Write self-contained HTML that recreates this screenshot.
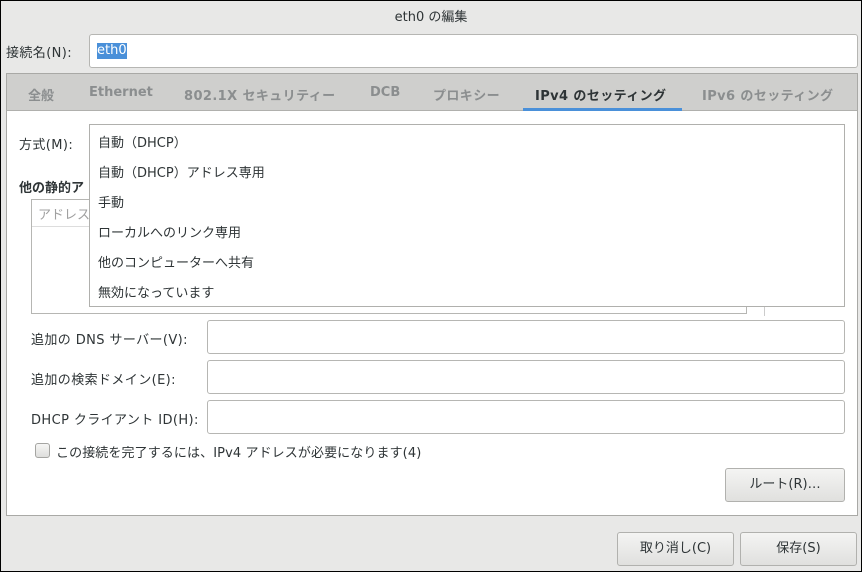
<!DOCTYPE html>
<html><head><meta charset="utf-8"><style>
*{box-sizing:border-box;margin:0;padding:0}
body{width:862px;height:572px;overflow:hidden;background:#e8e8e7;font-family:"DejaVu Sans","Noto Sans CJK JP",sans-serif;font-size:13px;color:#2e3436;position:relative}
.frame{position:absolute;left:0;top:0;width:862px;height:572px;border:1px solid #000}
.abs{position:absolute}
.inp{position:absolute;background:#fff;border:1px solid #b6b6b3;border-radius:3px}
.btn{position:absolute;border:1px solid #b1b1ae;border-radius:3px;background:linear-gradient(#f4f4f3,#e0e0de);text-align:center;line-height:31px;color:#2e3436}
.tab{position:absolute;top:85px;font-weight:bold;color:#8b8e8f}
.item{position:absolute;left:8px}
</style></head><body>
<div class="frame"></div>
<div class="abs" style="left:0;top:6px;width:862px;text-align:center;color:#2e3436">eth0 の編集</div>
<div class="abs" style="left:6px;top:42px;letter-spacing:0.4px">接続名(N):</div>
<div class="inp" style="left:89px;top:34px;width:769px;height:34px"><span class="abs" style="left:7px;top:8px;background:#4a90d9;color:#fff;line-height:16px">eth0</span></div>
<div class="abs" style="left:6px;top:73px;width:852px;height:443px;border:1px solid #a9a9a6;background:#fff"></div>
<div class="abs" style="left:7px;top:74px;width:850px;height:37px;background:#cfcfcd;border-bottom:1px solid #b0b0ad"></div>
<div class="tab" style="left:28px">全般</div>
<div class="tab" style="left:89px">Ethernet</div>
<div class="tab" style="left:184px;letter-spacing:0.4px">802.1X セキュリティー</div>
<div class="tab" style="left:370px">DCB</div>
<div class="tab" style="left:433px;letter-spacing:0.4px">プロキシー</div>
<div class="tab" style="left:535px;color:#2e3436;letter-spacing:0.4px">IPv4 のセッティング</div>
<div class="abs" style="left:523px;top:108px;width:159px;height:3px;background:#4a90d9"></div>
<div class="tab" style="left:702px;letter-spacing:0.4px">IPv6 のセッティング</div>
<div class="abs" style="left:19px;top:134px;letter-spacing:0.4px">方式(M):</div>
<div class="abs" style="left:19px;top:177px;font-weight:bold">他の静的ア</div>
<div class="abs" style="left:31px;top:199px;width:716px;height:115px;border:1px solid #b6b6b3;background:#fff"><div style="height:27px;border-bottom:1px solid #ddd;color:#a0a0a0;padding:4px 6px">アドレス</div></div>
<div class="abs" style="left:764px;top:298px;width:1px;height:18px;background:#ccc"></div>
<div class="abs" style="left:89px;top:124px;width:756px;height:183px;border:1px solid #b0b0ad;background:#fff">
<div class="item" style="top:7px">自動（DHCP）</div>
<div class="item" style="top:37px">自動（DHCP）アドレス専用</div>
<div class="item" style="top:67px">手動</div>
<div class="item" style="top:97px">ローカルへのリンク専用</div>
<div class="item" style="top:127px">他のコンピューターへ共有</div>
<div class="item" style="top:157px">無効になっています</div>
</div>
<div class="abs" style="left:31px;top:329px;letter-spacing:0.4px">追加の DNS サーバー(V):</div>
<div class="inp" style="left:207px;top:320px;width:638px;height:34px"></div>
<div class="abs" style="left:31px;top:369px;letter-spacing:0.4px">追加の検索ドメイン(E):</div>
<div class="inp" style="left:207px;top:360px;width:638px;height:34px"></div>
<div class="abs" style="left:31px;top:409px;letter-spacing:0.4px">DHCP クライアント ID(H):</div>
<div class="inp" style="left:207px;top:400px;width:638px;height:34px"></div>
<div class="abs" style="left:35px;top:443px;width:15px;height:15px;border:1px solid #a5a5a2;border-radius:3px;background:linear-gradient(#f6f6f5,#dededc)"></div>
<div class="abs" style="left:56px;top:442px;letter-spacing:0.1px">この接続を完了するには、IPv4 アドレスが必要になります(4)</div>
<div class="btn" style="left:725px;top:468px;width:120px;height:34px">ルート(R)…</div>
<div class="btn" style="left:617px;top:532px;width:117px;height:34px">取り消し(C)</div>
<div class="btn" style="left:740px;top:532px;width:117px;height:34px">保存(S)</div>
</body></html>
